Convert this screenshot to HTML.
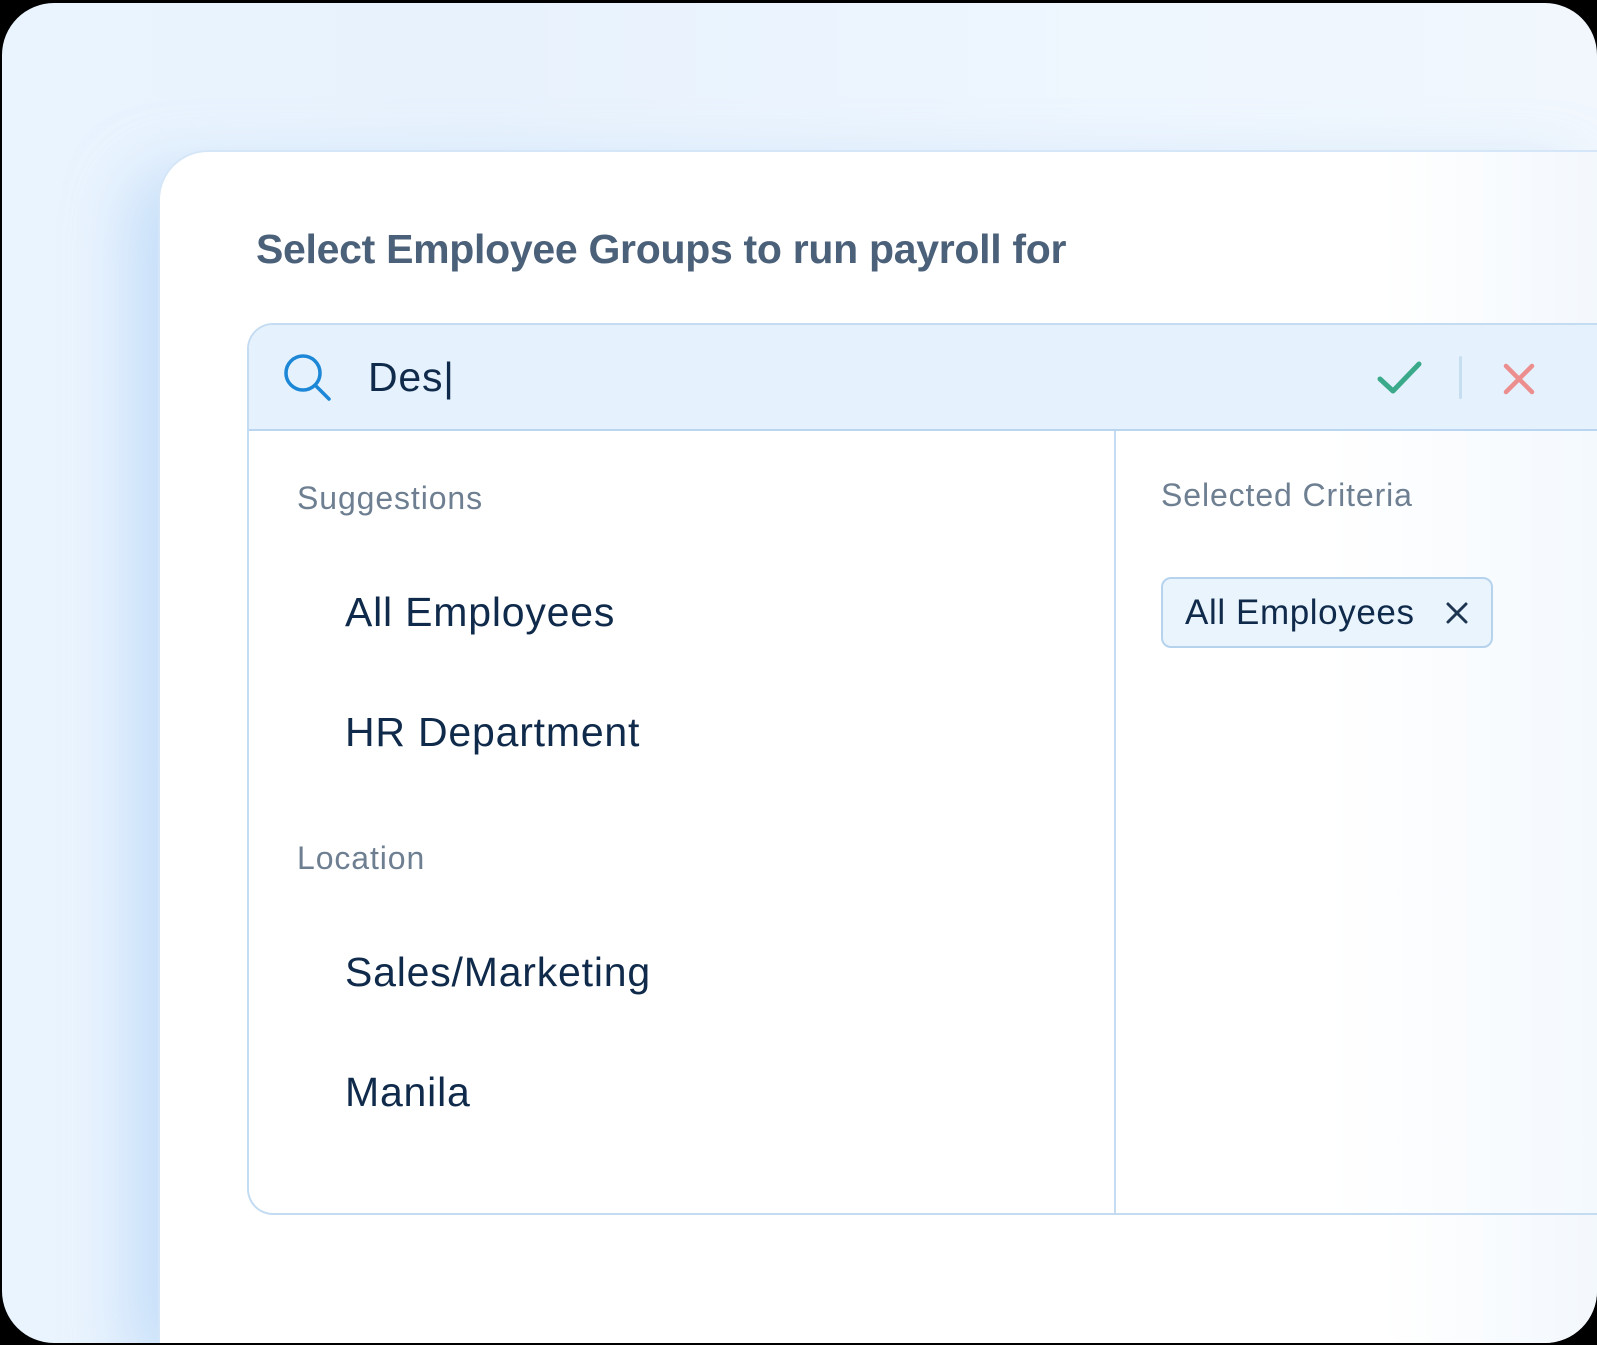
<!DOCTYPE html>
<html><head><meta charset="utf-8"><style>
*{margin:0;padding:0;box-sizing:border-box}
html,body{width:1597px;height:1345px;overflow:hidden}
body{background:#000;position:relative;font-family:"Liberation Sans",sans-serif}
.wrap{position:absolute;left:0;top:0;width:1597px;height:1345px;clip-path:inset(3px 0 2px 2px round 52px);background:linear-gradient(90deg,#eaf4fe 0%,#e8f2fd 30%,#eef6fe 70%,#f1f7fd 100%);overflow:hidden}
.card{position:absolute;left:158px;top:150px;width:1439px;height:1195px;border-radius:50px 0 0 0;background:linear-gradient(90deg,#fff 0%,#fff 85%,#f3f8fd 100%);border:2px solid #d4e6f7;border-right:none;border-bottom:none;box-shadow:-30px 20px 60px rgba(170,205,245,.55)}
.title{position:absolute;left:256px;top:226px;font-size:41px;font-weight:bold;color:#4b6079;letter-spacing:-.3px}
.box{position:absolute;left:247px;top:323px;width:1350px;height:892px;border:2px solid #c4dcf2;border-right:none;border-radius:26px 0 0 26px;background:linear-gradient(90deg,#fff 0%,#fff 80%,#f4f9fe 100%);overflow:hidden}
.head{position:absolute;left:0;top:0;width:100%;height:106px;background:#e5f1fc;border-bottom:2px solid #b9d5ef}
.vd{position:absolute;left:865px;top:106px;width:2px;height:786px;background:#c4dcf2}
.t{position:absolute;color:#0f2a4a;font-size:41px;white-space:nowrap;letter-spacing:.8px}
.lab{position:absolute;color:#6e7f92;font-size:32px;white-space:nowrap;letter-spacing:.9px}
.chip{position:absolute;left:1161px;top:577px;width:332px;height:71px;border:2px solid #b6d3ee;border-radius:10px;background:#eaf4fd}
</style></head><body>
<div class="wrap">
<div class="card"></div>
<div class="title">Select Employee Groups to run payroll for</div>
<div class="box"><div class="head"></div><div class="vd"></div></div>
<svg style="position:absolute;left:282px;top:352px" width="54" height="54" viewBox="0 0 54 54"><circle cx="21" cy="21" r="17" fill="none" stroke="#1b87d6" stroke-width="3.5"/><line x1="33.5" y1="33.5" x2="47" y2="47" stroke="#1b87d6" stroke-width="3.5" stroke-linecap="round"/></svg>
<div class="t" style="left:368px;top:354px">Des|</div>
<svg style="position:absolute;left:1376px;top:358px" width="48" height="40" viewBox="0 0 48 40"><path d="M4 21 L17 33 L43 6" fill="none" stroke="#3aaa8a" stroke-width="5" stroke-linecap="round" stroke-linejoin="round"/></svg>
<div style="position:absolute;left:1459px;top:356px;width:3px;height:43px;background:#c7ddf0;border-radius:2px"></div>
<svg style="position:absolute;left:1502px;top:362px" width="34" height="34" viewBox="0 0 34 34"><path d="M4 4 L30 30 M30 4 L4 30" stroke="#ec8e8e" stroke-width="4.5" stroke-linecap="round"/></svg>
<div class="lab" style="left:297px;top:480px">Suggestions</div>
<div class="t" style="left:345px;top:589px">All Employees</div>
<div class="t" style="left:345px;top:709px">HR Department</div>
<div class="lab" style="left:297px;top:840px">Location</div>
<div class="t" style="left:345px;top:949px">Sales/Marketing</div>
<div class="t" style="left:345px;top:1069px">Manila</div>
<div class="lab" style="left:1161px;top:477px">Selected Criteria</div>
<div class="chip"></div>
<div class="t" style="left:1185px;top:593px;font-size:35px;letter-spacing:.6px">All Employees</div>
<svg style="position:absolute;left:1446px;top:602px" width="22" height="22" viewBox="0 0 22 22"><path d="M2 2 L20 20 M20 2 L2 20" stroke="#1d3550" stroke-width="3" stroke-linecap="round"/></svg>
</div>
</body></html>
